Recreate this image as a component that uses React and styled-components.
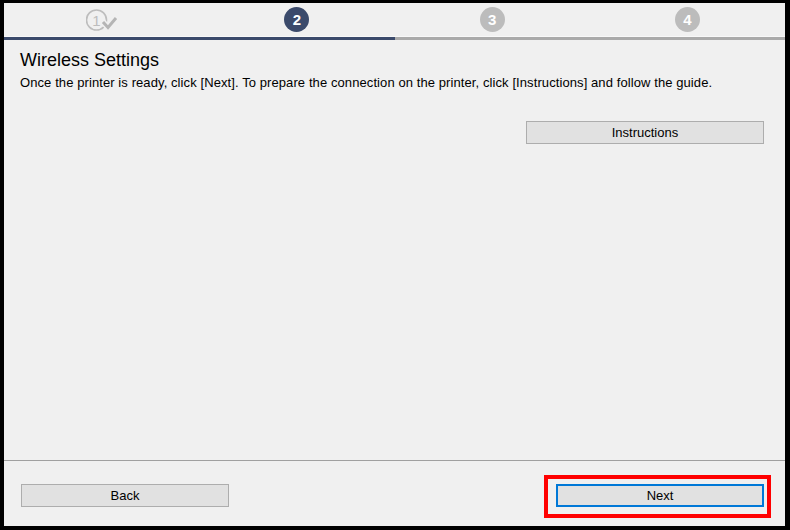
import React from "react";
import styled, { createGlobalStyle } from "styled-components";

const GlobalStyle = createGlobalStyle`
  html, body {
    margin: 0;
    padding: 0;
    background: #f0f0f0;
  }
  * { box-sizing: border-box; }
`;

const Frame = styled.div`
  width: 790px;
  height: 530px;
  display: flex;
  flex-direction: column;
  background: #f0f0f0;
  border-style: solid;
  border-color: #000;
  border-width: 3px 5px 4px 4px;
  font-family: "Liberation Sans", Arial, sans-serif;
  color: #000;
`;

const Stepper = styled.div`
  height: 34px;
  display: grid;
  grid-template-columns: repeat(4, 1fr);
  align-items: center;
  border-bottom: 1px solid #f8f8f8;
`;

const Step = styled.div`
  display: flex;
  justify-content: center;
  align-items: center;
`;

const StepDot = styled.div`
  width: 25px;
  height: 25px;
  border-radius: 50%;
  background: ${(p) => (p.$active ? "#3b4a6b" : "#bcbcbc")};
  color: #fff;
  font-weight: bold;
  font-size: 15px;
  display: flex;
  align-items: center;
  justify-content: center;
`;

const Track = styled.div`
  height: 3px;
  background: #aaaaaa;
  display: flex;
`;

const TrackFill = styled.div`
  width: 50%;
  background: #3b4a6b;
`;

const Content = styled.div`
  flex: 1;
  padding: 10px 21px 0 16px;
  display: flex;
  flex-direction: column;
`;

const Title = styled.h1`
  margin: 0;
  font-size: 18px;
  font-weight: normal;
  line-height: 20px;
`;

const Description = styled.p`
  margin: 5px 0 0;
  font-size: 13px;
  line-height: 16px;
  letter-spacing: 0.09px;
`;

const Button = styled.button`
  width: ${(p) => p.$width || "208px"};
  height: 23px;
  padding: 0;
  background: #e1e1e1;
  border: ${(p) => (p.$focused ? "2px solid #0078d7" : "1px solid #adadad")};
  font-family: "Liberation Sans", Arial, sans-serif;
  font-size: 13px;
  color: #000;
`;

const ButtonRow = styled.div`
  display: flex;
  justify-content: flex-end;
  margin-top: 30px;
`;

const Footer = styled.div`
  height: 66px;
  border-top: 1px solid #a0a0a0;
  display: flex;
  justify-content: space-between;
  align-items: flex-start;
  padding: 23px 21px 0 17px;
`;

const Highlight = styled.div`
  border: 4px solid #ff0000;
  padding: 5px 3px 7px 8px;
  margin-top: -9px;
  margin-right: -7px;
`;

function DoneStep() {
  return (
    <svg width="32" height="26" viewBox="0 0 32 26">
      <circle cx="10.5" cy="13" r="10" fill="none" stroke="#bdbdbd" strokeWidth="1.6" />
      <text
        x="10.5"
        y="18.5"
        textAnchor="middle"
        fontSize="15"
        fontFamily="Liberation Sans, Arial, sans-serif"
        fill="#bdbdbd"
      >
        1
      </text>
      <polyline
        points="17,15 22,20.5 30,11"
        fill="none"
        stroke="#f0f0f0"
        strokeWidth="6"
        strokeLinecap="round"
      />
      <polyline
        points="17,15 22,20.5 30,11"
        fill="none"
        stroke="#b5b5b5"
        strokeWidth="3"
      />
    </svg>
  );
}

export default function App() {
  return (
    <>
      <GlobalStyle />
      <Frame>
        <Stepper>
          <Step>
            <DoneStep />
          </Step>
          <Step>
            <StepDot $active>2</StepDot>
          </Step>
          <Step>
            <StepDot>3</StepDot>
          </Step>
          <Step>
            <StepDot>4</StepDot>
          </Step>
        </Stepper>
        <Track>
          <TrackFill />
        </Track>
        <Content>
          <Title>Wireless Settings</Title>
          <Description>
            Once the printer is ready, click [Next]. To prepare the connection on the printer, click [Instructions] and follow the guide.
          </Description>
          <ButtonRow>
            <Button $width="238px">Instructions</Button>
          </ButtonRow>
        </Content>
        <Footer>
          <Button>Back</Button>
          <Highlight>
            <Button $focused>Next</Button>
          </Highlight>
        </Footer>
      </Frame>
    </>
  );
}
